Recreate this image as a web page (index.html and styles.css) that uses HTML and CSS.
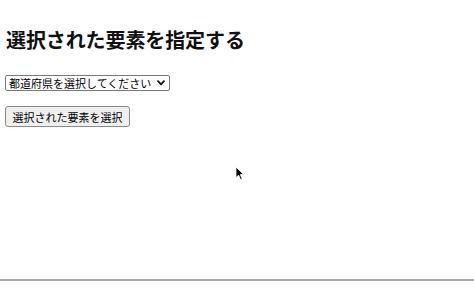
FILE: index.html
```html
<!DOCTYPE html>
<html lang="ja">
<head>
<meta charset="utf-8">
<title>選択された要素を指定する</title>
<link rel="stylesheet" href="styles.css">
</head>
<body>
<main class="page">
  <h1 class="title">選択された要素を指定する</h1>
  <div class="select-wrap">
    <select class="pref">
      <option>都道府県を選択してください</option>
      <option>北海道</option>
      <option>東京都</option>
    </select>
    <svg class="chev" width="8" height="6" viewBox="0 0 8 6" aria-hidden="true"><path d="M1 1.2 L4 4.3 L7 1.2" fill="none" stroke="#111" stroke-width="1.8" stroke-linecap="round" stroke-linejoin="round"/></svg>
  </div>
  <div class="btn-row">
    <button class="btn" type="button">選択された要素を選択</button>
  </div>
  <div class="rule"></div>
</main>
<svg class="cursor" width="10" height="15" viewBox="0 0 10 15" aria-hidden="true"><path d="M1 1 L1 11.5 L3.6 9.2 L5.6 13.6 L7.2 12.9 L5.3 8.6 L8.6 8.4 Z" fill="#000" stroke="#fff" stroke-width="0.8"/></svg>
</body>
</html>
```

FILE: styles.css
```css
html, body {
  margin: 0;
  padding: 0;
  background: #fff;
}
body {
  font-family: "Noto Sans CJK JP", "Noto Sans", "Liberation Sans", sans-serif;
  color: #000;
}
.page {
  display: flex;
  flex-direction: column;
  align-items: flex-start;
  padding: 0 0 0 5px;
}
.title {
  margin: 28px 0 0 1px;
  font-size: 20px;
  line-height: 24px;
  font-weight: 700;
  letter-spacing: -0.1px;
  color: #111;
}
.select-wrap {
  margin-top: 23px;
  display: flex;
  align-items: center;
  width: 165px;
  height: 16px;
  box-sizing: border-box;
  border: 1px solid #7a7a7a;
  border-radius: 2px;
  background: #fff;
}
.pref {
  appearance: none;
  -webkit-appearance: none;
  border: 0;
  outline: none;
  background: transparent;
  font-family: inherit;
  font-size: 11px;
  line-height: 14px;
  height: 14px;
  padding: 0 0 0 3px;
  margin: 0;
  color: #000;
  flex: 1;
  min-width: 0;
}
.chev {
  margin-right: 4px;
  flex: none;
}
.btn-row {
  display: flex;
  margin-top: 15px;
}
.btn {
  font-family: inherit;
  font-size: 11px;
  line-height: 14px;
  height: 21px;
  width: 125px;
  padding: 0;
  margin: 0;
  border: 1px solid #8a8a8a;
  border-radius: 3px;
  background: #efefef;
  color: #000;
}
.rule {
  align-self: stretch;
  margin: 152px 0 0 -5px;
  height: 2px;
  background: #a9a9a9;
}
.cursor {
  position: absolute;
  left: 235px;
  top: 166px;
}
```
